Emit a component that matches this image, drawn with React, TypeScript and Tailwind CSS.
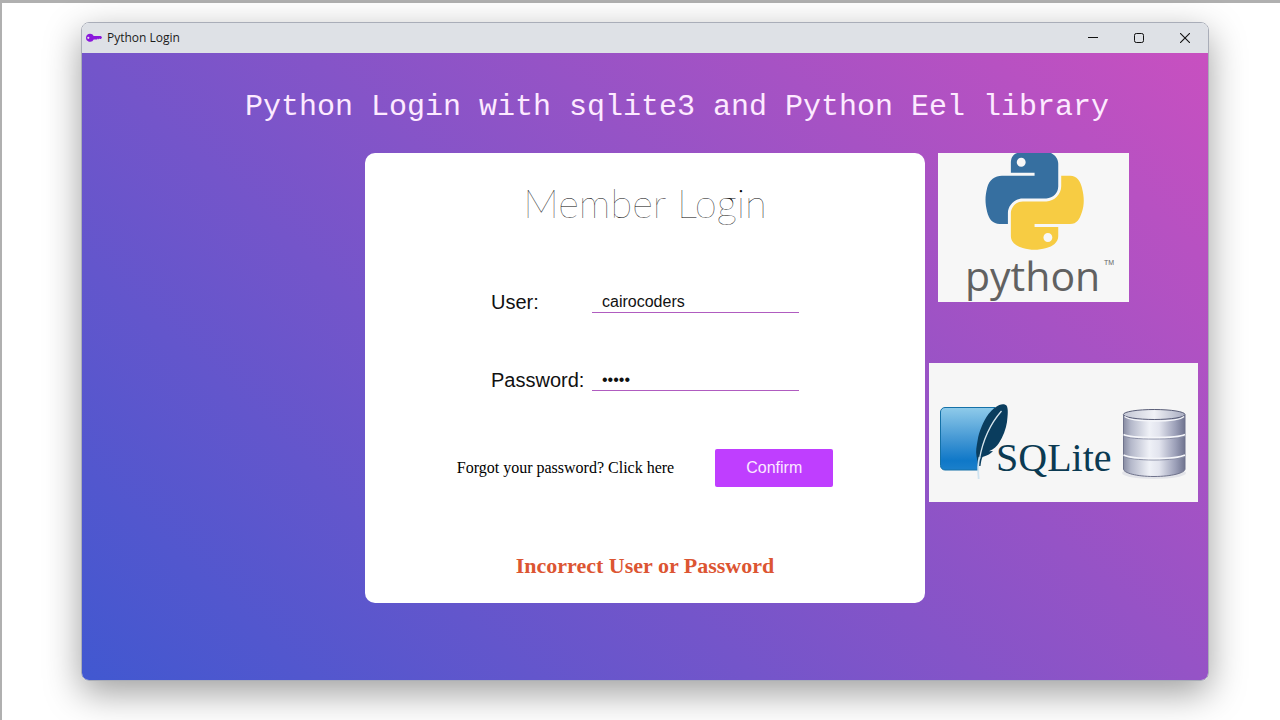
import { useState } from "react";

function KeyIcon() {
  return (
    <svg width="16" height="10" viewBox="0 0 16 10" aria-hidden="true">
      <path
        fillRule="evenodd"
        fill="#8a17dc"
        d="M4 .8a4 4 0 0 1 3.700 2.200H15l1 1.400-1 1.700h-1l-.6-.6-.7.9-.8-.9-.8.9H7.700A4 4 0 1 1 4 .8Zm-1.700 2.900a1.100 1.100 0 1 0 0 2.200 1.100 1.100 0 0 0 0-2.200Z"
      />
    </svg>
  );
}

function TitleBar() {
  return (
    <header className="flex h-[30px] items-center bg-[#dee1e6] pl-1">
      <KeyIcon />
      <span className="ml-[5px] flex-1 font-['Open_Sans',sans-serif] text-xs text-[#1b1b1b]">Python Login</span>
      <button type="button" aria-label="Minimize" className="flex h-full w-[46px] items-center justify-center">
        <svg width="10" height="10" viewBox="0 0 10 10" fill="none" stroke="#111">
          <path d="M0 4.500h10" />
        </svg>
      </button>
      <button type="button" aria-label="Maximize" className="flex h-full w-[46px] items-center justify-center">
        <svg width="10" height="10" viewBox="0 0 10 10" fill="none" stroke="#111">
          <rect x=".5" y=".5" width="9" height="9" rx="1.8" />
        </svg>
      </button>
      <button type="button" aria-label="Close" className="flex h-full w-[46px] items-center justify-center">
        <svg width="10" height="10" viewBox="0 0 10 10" fill="none" stroke="#111" strokeWidth="1.1">
          <path d="M0 0l10 10M10 0L0 10" />
        </svg>
      </button>
    </header>
  );
}

function PythonLogo() {
  return (
    <svg width="191" height="149" viewBox="0 0 191 149" role="img" aria-label="Python" className="ml-[13px] bg-[#f7f7f7]">
      <g transform="translate(47.5 -2.5) scale(.884)">
        <path
          fill="#366fa0"
          fillRule="evenodd"
          d="M54.92 0C50.34.02 45.96.41 42.11 1.09 30.76 3.1 28.7 7.29 28.7 15.03v10.22h26.81v3.41H18.64c-7.79 0-14.62 4.68-16.75 13.59-2.46 10.21-2.57 16.59 0 27.25 1.91 7.94 6.46 13.59 14.25 13.59h9.22v-12.25c0-8.85 7.66-16.65 16.75-16.65h26.78c7.45 0 13.41-6.14 13.41-13.63V15.03c0-7.27-6.13-12.72-13.41-13.94C64.28.33 59.5-.02 54.92 0Zm-14.5 8.22c2.77 0 5.03 2.3 5.03 5.12 0 2.82-2.26 5.1-5.03 5.1-2.78 0-5.03-2.28-5.03-5.1 0-2.82 2.25-5.12 5.03-5.12Z"
        />
        <path
          fill="#f7cc43"
          fillRule="evenodd"
          d="M85.64 28.66v11.9c0 9.23-7.83 17-16.75 17H42.11c-7.34 0-13.41 6.28-13.41 13.63v25.53c0 7.26 6.32 11.54 13.41 13.62 8.48 2.5 16.62 2.95 26.78 0 6.75-1.95 13.4-5.89 13.4-13.62V86.5H55.51v-3.41H95.7c7.79 0 10.7-5.43 13.41-13.59 2.8-8.4 2.68-16.48 0-27.25-1.93-7.76-5.61-13.59-13.41-13.59ZM70.58 93.31c2.77 0 5.03 2.28 5.03 5.1 0 2.82-2.26 5.12-5.03 5.12-2.77 0-5.04-2.3-5.04-5.12 0-2.82 2.27-5.1 5.04-5.1Z"
        />
      </g>
      <text x="27" y="138" fontFamily="'Open Sans', sans-serif" fontSize="41" fontWeight="400" fill="#616161">
        python
      </text>
      <text x="166" y="112" fontFamily="'Liberation Sans', sans-serif" fontSize="7" fill="#666">
        TM
      </text>
    </svg>
  );
}

function SqliteLogo() {
  return (
    <svg width="269" height="139" viewBox="0 0 269 139" role="img" aria-label="SQLite" className="mt-[61px] ml-1 bg-[#f6f6f6]">
      <defs>
        <linearGradient id="tile" x1="0" y1="0" x2="0" y2="1">
          <stop offset="0" stopColor="#8fcbea" />
          <stop offset=".55" stopColor="#3d93d2" />
          <stop offset=".85" stopColor="#0f78c8" />
          <stop offset="1" stopColor="#1b80cb" />
        </linearGradient>
        <linearGradient id="metal" x1="0" y1="0" x2="1" y2="0">
          <stop offset="0" stopColor="#888ca3" />
          <stop offset=".12" stopColor="#b4b8ca" />
          <stop offset=".42" stopColor="#eff1f7" />
          <stop offset=".58" stopColor="#e2e4ee" />
          <stop offset=".85" stopColor="#9a9eb7" />
          <stop offset="1" stopColor="#70748f" />
        </linearGradient>
        <linearGradient id="lid" x1="0" y1="0" x2="1" y2="0">
          <stop offset="0" stopColor="#c4c7d5" />
          <stop offset=".5" stopColor="#f0f1f6" />
          <stop offset="1" stopColor="#a7abc0" />
        </linearGradient>
      </defs>

      <path
        d="M16 44.5h50C55 59 49 76 49 107H16a4.500 4.500 0 0 1-4.500-4.500V49a4.500 4.500 0 0 1 4.500-4.500Z"
        fill="url(#tile)"
        stroke="#1471a8"
        strokeWidth="1"
      />
      <path
        d="M77.500 42.500C73 38.500 65 44 59.500 51c-5 7-9.500 17-11 27-.8 5-2 10-1 15l1.200 7 .8 3 2 0c.5-4 1-7 2-9 5-1.500 8.500-3.500 10.500-6l-4 .3c5-2.300 8-5 10-8.300 4-6.500 7-14 8-21 .8-6.500 1.500-13.500-.5-16.500Z"
        fill="#0a3d5e"
      />
      <path d="M72.500 48C62 60 54 76 50.500 96" fill="none" stroke="#d5e4ec" strokeWidth="1.300" />
      <path d="M50.500 94c-1.800 7-1.600 14-.8 22" fill="none" stroke="#cfe3f0" strokeWidth="1.800" />

      <text x="67" y="108" fontFamily="'Liberation Serif', serif" fontSize="40" fill="#0b3a52">
        SQLite
      </text>

      <ellipse cx="225" cy="110" rx="32" ry="6" fill="#e3e4e9" />
      <path d="M194.500 52v54c0 4 13 7.500 30.500 7.500s31-3.500 31-7.500V52Z" fill="url(#metal)" stroke="#6f738c" />
      <path
        d="M194.500 73c4 2 15 3 30.500 3s27-1 31-3M194.500 93.500c4 2 15 3.500 30.500 3.500s27-1.500 31-3.500"
        fill="none"
        stroke="#8b8fa6"
        strokeWidth="1"
      />
      <path
        d="M194.500 71.500c4 2 15 3 30.500 3s27-1 31-3M194.500 92c4 2 15 3.500 30.500 3.500s27-1.500 31-3.500"
        fill="none"
        stroke="#f5f6fa"
        strokeWidth="1.600"
      />
      <ellipse cx="225.200" cy="51.500" rx="30.800" ry="5" fill="url(#lid)" stroke="#5a5e78" />
      <path d="M195.500 53.500c4 3 15 4.500 29.500 4.500s27-1.500 30-4.500" fill="none" stroke="#f5f6fa" strokeWidth="1.300" />
    </svg>
  );
}

const labelClass = "pt-1 text-xl leading-6 text-[#111]";
const fieldClass =
  "h-[26px] w-full border-b border-[#b05cc0] bg-transparent px-[10px] pt-1 text-base leading-5 text-[#111] outline-none";

function LoginCard() {
  const [user, setUser] = useState("cairocoders");
  const [password, setPassword] = useState("12345");
  return (
    <form
      onSubmit={(event) => event.preventDefault()}
      className="flex flex-col items-center rounded-[10px] bg-white pt-[22px] pb-[23px] font-['Liberation_Sans',sans-serif]"
    >
      <h2 className="font-['Lato',sans-serif] text-[40px] leading-[56px] font-extralight text-black">Member Login</h2>

      <div className="mt-[55px] grid grid-cols-[101px_207px] items-center gap-y-[50px]">
        <label htmlFor="user" className={labelClass}>
          User:
        </label>
        <input id="user" type="text" value={user} onChange={(e) => setUser(e.target.value)} className={fieldClass} />
        <label htmlFor="password" className={labelClass}>
          Password:
        </label>
        <input
          id="password"
          type="password"
          value={password}
          onChange={(e) => setPassword(e.target.value)}
          className={fieldClass}
        />
      </div>

      <div className="mt-[57px] flex items-center gap-[41px]">
        <a href="#forgot" className="font-['Liberation_Serif',serif] text-base text-black">
          Forgot your password? Click here
        </a>
        <button type="submit" className="h-[38px] w-[118px] rounded-[2px] bg-[#bf3eff] text-base text-[#fbe9ff]">
          Confirm
        </button>
      </div>

      <p role="alert" className="mt-[65px] font-['Liberation_Serif',serif] text-[22px] leading-7 font-bold text-[#dc5532]">
        Incorrect User or Password
      </p>
    </form>
  );
}

export default function App() {
  return (
    <div className="min-h-screen border-t-[3px] border-l-2 border-[#b0b0b0] bg-white pt-[19px] pr-[71px] pb-[39px] pl-[79px]">
      <div className="overflow-hidden rounded-lg border border-[#a9adb8] shadow-[0_12px_36px_rgba(0,0,0,0.38)]">
        <TitleBar />
        <main className="bg-[linear-gradient(43deg,#4158d0,#c850c0)] pb-[77px]">
          <h1 className="pt-8 pl-16 text-center font-['Liberation_Mono',monospace] text-[30px] leading-[44px] text-[#fdeaff]">
            Python Login with sqlite3 and Python Eel library
          </h1>
          <div className="mt-6 grid grid-cols-[1fr_560px_1fr] items-start">
            <div className="col-start-2">
              <LoginCard />
            </div>
            <div className="flex flex-col items-start">
              <PythonLogo />
              <SqliteLogo />
            </div>
          </div>
        </main>
      </div>
    </div>
  );
}
